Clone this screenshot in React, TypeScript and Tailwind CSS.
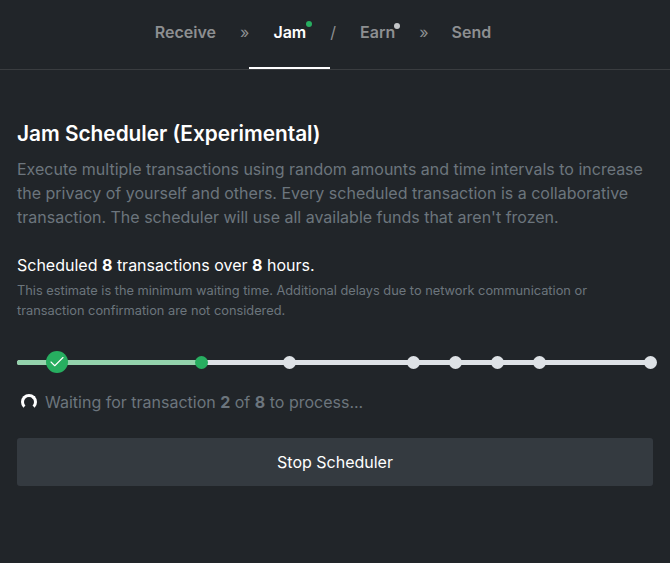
import React from "react";
import { Check } from "lucide-react";

const dots = [289, 413, 455, 497, 539, 650];

const NavLink = ({ label, dot }: { label: string; dot?: string }) => (
  <span className="relative text-base font-semibold text-[#8d8f91]">
    {label}
    {dot && <span className={`absolute -right-[5px] top-[1px] h-[6px] w-[6px] rounded-full ${dot}`} />}
  </span>
);

const App = () => {
  return (
    <div className="h-[563px] w-[670px] overflow-hidden bg-[#212529] font-['Inter',sans-serif] text-white">
      {/* Nav */}
      <nav className="flex h-[70px] justify-center border-b border-[#3a3d40] pr-[24px]">
        <div className="flex h-[64px] items-center">
          <NavLink label="Receive" />
          <span className="ml-[24px] text-base text-[#8d8f91]">»</span>
          <div className="relative flex h-[64px] w-[81px] items-center justify-center">
            <span className="relative text-base font-semibold text-white">
              Jam
              <span className="absolute -right-[6px] top-[1px] h-[6px] w-[6px] rounded-full bg-[#27ae60]" />
            </span>
            <span className="absolute -bottom-[5px] left-0 h-[2px] w-full bg-white" />
          </div>
          <span className="text-base text-[#8d8f91]">/</span>
          <span className="ml-[24px]">
            <NavLink label="Earn" dot="bg-[#c4c6c8]" />
          </span>
          <span className="ml-[24px] text-base text-[#8d8f91]">»</span>
          <span className="ml-[23px]">
            <NavLink label="Send" />
          </span>
        </div>
      </nav>

      <main className="px-[17px] pt-[50px]">
        <h2 className="text-[20.8px] leading-[28px] font-semibold">Jam Scheduler (Experimental)</h2>
        <p className="mt-[9px] text-base leading-[24px] text-[#6c757d]">
          Execute multiple transactions using random amounts and time intervals to increase the privacy of yourself and
          others. Every scheduled transaction is a collaborative transaction. The scheduler will use all available funds
          that aren't frozen.
        </p>

        <p className="mt-[24px] text-base leading-[24px]">
          Scheduled <b className="font-bold">8</b> transactions over <b className="font-bold">8</b> hours.
        </p>
        <p className="mt-[4px] text-[12.8px] leading-[20px] text-[#6c757d]">
          This estimate is the minimum waiting time. Additional delays due to network communication or transaction
          confirmation are not considered.
        </p>

        {/* Progress */}
        <div className="relative mt-[39px] h-[5px] w-[636px] rounded-full bg-[#dee2e6]">
          <div className="h-full w-[184px] rounded-l-full bg-[#94d3ac]" />
          <span className="absolute left-[29px] top-[-9px] flex h-[22px] w-[22px] items-center justify-center rounded-full bg-[#27ae60]">
            <Check size={18} strokeWidth={1.5} className="text-white" />
          </span>
          <span className="absolute left-[178px] top-[-4px] h-[13px] w-[13px] rounded-full bg-[#27ae60]" />
          {dots.map((x) => (
            <span
              key={x}
              className="absolute top-[-4px] h-[13px] w-[13px] rounded-full bg-[#dee2e6]"
              style={{ left: x - 17 - 6.5 }}
            />
          ))}
        </div>

        <div className="mt-[25px] flex items-center gap-[8px] pl-[4px]">
          <span className="h-[16px] w-[16px] rounded-full border-[3px] border-white border-b-transparent" />
          <span className="text-base leading-[24px] text-[#6c757d]">
            Waiting for transaction <b className="font-bold">2</b> of <b className="font-bold">8</b> to process...
          </span>
        </div>

        <button className="mt-[24px] h-[48px] w-[636px] rounded-[3px] bg-[#343a40] text-base text-white">
          Stop Scheduler
        </button>
      </main>
    </div>
  );
};

export default App;
